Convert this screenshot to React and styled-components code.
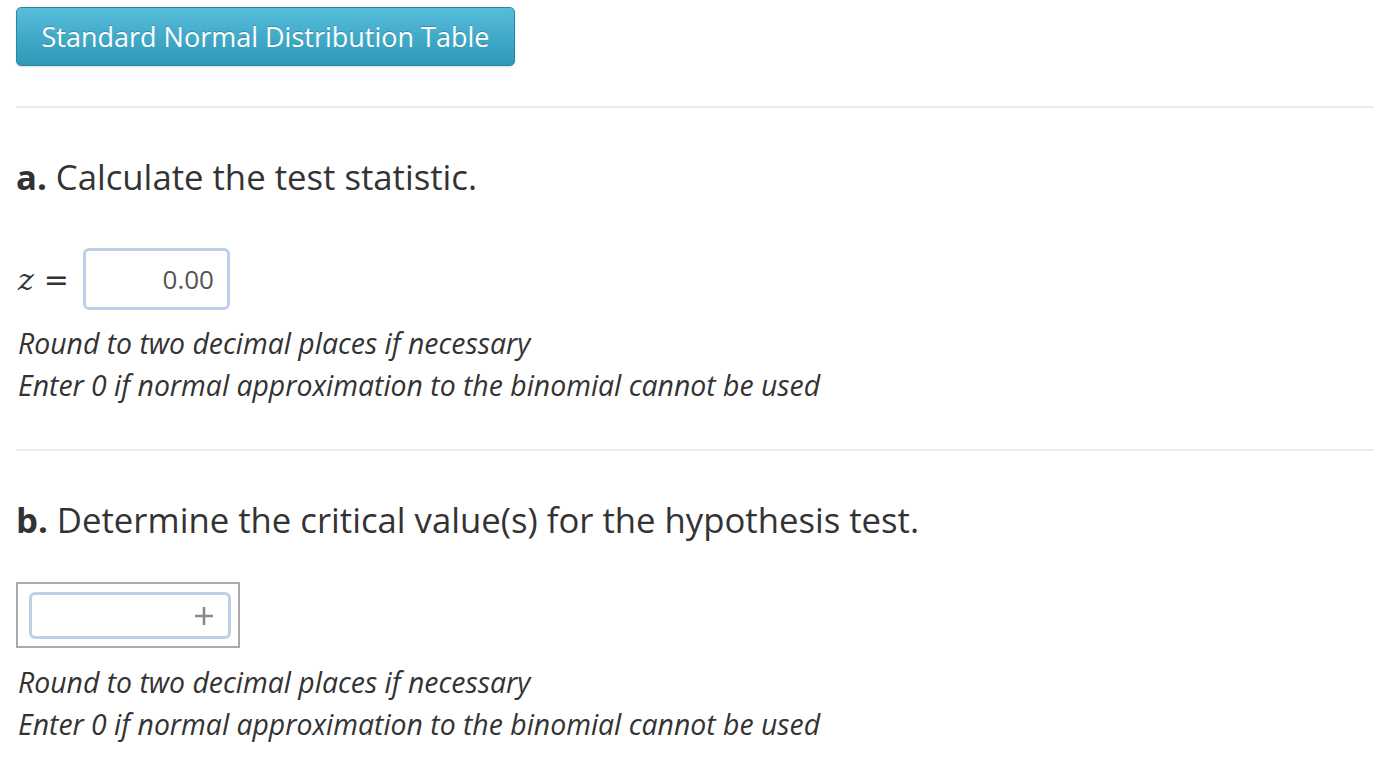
import styled, { createGlobalStyle } from 'styled-components'

const Global = createGlobalStyle`
  html, body { margin: 0; padding: 0; background: #fff; }
  body { font-family: "Open Sans", "Liberation Sans", sans-serif; color: #333; }
`

const Page = styled.div`
  padding: 7px 0 0 16px;
`

const TableButton = styled.button`
  display: block;
  width: 499px;
  height: 59px;
  border: 1px solid #2a87a3;
  border-radius: 5px;
  background: linear-gradient(#56bddb, #2f98b7);
  color: #fff;
  font-family: "Open Sans", sans-serif;
  font-size: 27px;
  font-weight: 500;
  text-shadow: 0 -1px 0 rgba(0,0,0,0.2);
  box-shadow: 0 1px 2px rgba(0,0,0,0.15);
  padding: 0;
`

const Rule = styled.hr`
  border: 0;
  border-top: 2px solid #ececec;
  margin: ${p => p.$top}px 0 0 0;
`

const Heading = styled.h2`
  margin: ${p => p.$top}px 0 0 0;
  font-size: 34.7px;
  font-weight: 500;
  line-height: 46px;
  color: #333;
  b { font-weight: 700; }
`

const Row = styled.div`
  display: flex;
  align-items: center;
  gap: 14px;
  margin-top: 48px;
`

const Var = styled.span`
  font-family: "DejaVu Serif", "Liberation Serif", serif;
  font-style: italic;
  font-size: 30px;
  color: #333;
  display: flex;
  align-items: center;
  gap: 10px;
  padding-left: 2px;
`

const Eq = styled.span`
  font-style: normal;
  font-family: "DejaVu Sans", sans-serif;
  font-size: 30px;
`

const NumInput = styled.div`
  box-sizing: border-box;
  width: 147px;
  height: 62px;
  border: 3px solid #bcd0ea;
  border-radius: 6px;
  display: flex;
  align-items: center;
  justify-content: flex-end;
  padding-right: 13px;
  font-size: 26px;
  color: #555;
`

const Notes = styled.div`
  margin-top: ${p => p.$top}px;
  font-style: italic;
  font-size: 28.4px;
  font-weight: 500;
  line-height: 42px;
  color: #333;
  padding-left: 2px;
`

const Outer = styled.div`
  box-sizing: border-box;
  width: 224px;
  height: 66px;
  border: 2px solid #aaa;
  margin-top: 39px;
  padding: 8px 8px 0 11px;
`

const Inner = styled.div`
  box-sizing: border-box;
  width: 202px;
  height: 47px;
  border: 3px solid #bcd0ea;
  border-radius: 6px;
  display: flex;
  align-items: center;
  justify-content: flex-end;
  padding-right: 14px;
`

const Plus = () => (
  <svg width="20" height="20" viewBox="0 0 20 20">
    <path d="M10 1v18M1 10h18" stroke="#8a8a8a" strokeWidth="2.6" />
  </svg>
)

export default function App() {
  return (
    <Page>
      <Global />
      <TableButton>Standard Normal Distribution Table</TableButton>
      <Rule $top={40} />
      <Heading $top={46}><b>a.</b> Calculate the test statistic.</Heading>
      <Row>
        <Var>z<Eq>=</Eq></Var>
        <NumInput>0.00</NumInput>
      </Row>
      <Notes $top={12}>
        Round to two decimal places if necessary<br />
        Enter 0 if normal approximation to the binomial cannot be used
      </Notes>
      <Rule $top={43} />
      <Heading $top={46}><b>b.</b> Determine the critical value(s) for the hypothesis test.</Heading>
      <Outer>
        <Inner><Plus /></Inner>
      </Outer>
      <Notes $top={13}>
        Round to two decimal places if necessary<br />
        Enter 0 if normal approximation to the binomial cannot be used
      </Notes>
    </Page>
  )
}
